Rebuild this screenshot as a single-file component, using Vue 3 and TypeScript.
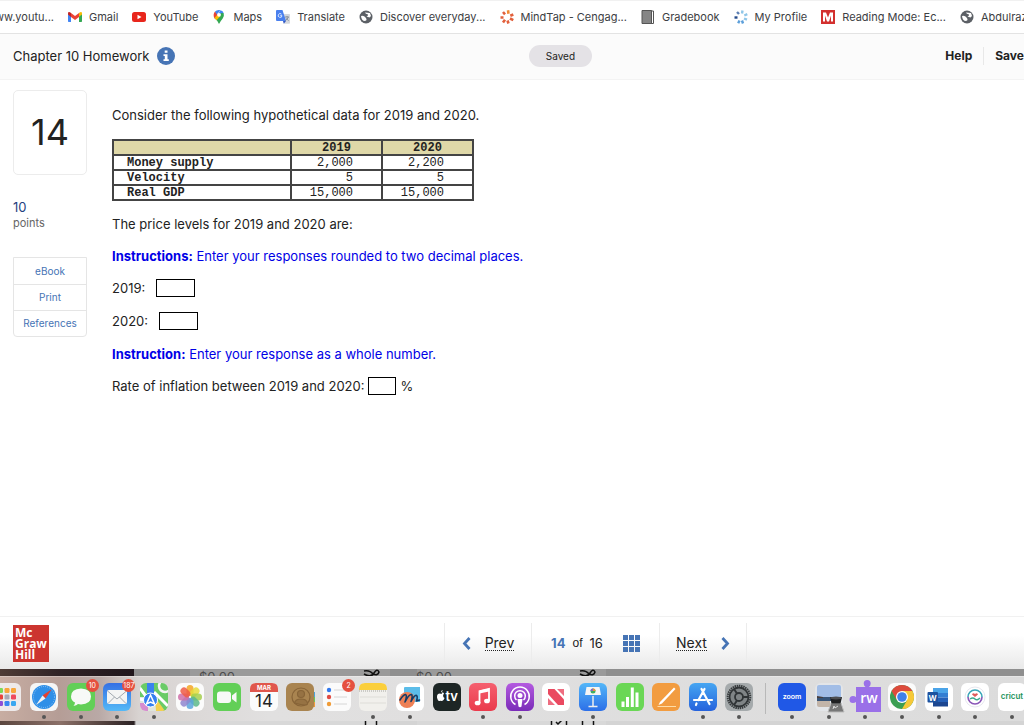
<script setup lang="ts">
import { ref } from 'vue'

interface Row {
  label: string
  first: string
  second: string
}

const rows: Row[] = [
  { label: 'Money supply', first: '2,000', second: '2,200' },
  { label: 'Velocity', first: '5', second: '5' },
  { label: 'Real GDP', first: '15,000', second: '15,000' },
]

const tools: string[] = ['eBook', 'Print', 'References']
const price2019 = ref('')
const price2020 = ref('')
const inflation = ref('')

const petals = [
  { angle: 0, color: '#f5a623' },
  { angle: 45, color: '#e5dc3c' },
  { angle: 90, color: '#a5cf4c' },
  { angle: 135, color: '#5cb88a' },
  { angle: 180, color: '#5aa5dc' },
  { angle: 225, color: '#8f86cf' },
  { angle: 270, color: '#cf6fa8' },
  { angle: 315, color: '#ee5a45' },
]

const launchpad = ['#7cd957', '#f7a63b', '#f7a63b', '#e8443a', '#a9a9b4', '#ee4a5f', '#8d4fd6', '#3a86f0', '#39a7f0']
</script>

<template>
  <div class="page">
    <nav class="bookmarks" aria-label="Bookmarks">
      <a href="#" class="bm bm-cut"><span>ww.youtu...</span></a>
      <a href="#" class="bm">
        <svg class="fav" viewBox="0 0 14 14"><path d="M0 3v8.300q0 .7.7.7H3V5.500z" fill="#4285f4" /><path d="M11 12h2.300q.7 0 .7-.7V3l-3 2.500z" fill="#34a853" /><path d="M11 6.700V3l1-.8q2-.9 2 1.200v1z" fill="#fbbc04" /><path d="M3 7V3l4 3.100L11 3v4l-4 3z" fill="#ea4335" /><path d="M0 4.500V3.400Q0 1.300 2 2.200l1 .8v3.900z" fill="#c5221f" /></svg>
        <span>Gmail</span>
      </a>
      <a href="#" class="bm">
        <svg class="fav" viewBox="0 0 14 14"><rect y="2" width="14" height="10" rx="2.500" fill="#e8261c" /><path d="M5.500 4.800 9.500 7l-4 2.200z" fill="#fff" /></svg>
        <span>YouTube</span>
      </a>
      <a href="#" class="bm">
        <svg class="fav" viewBox="0 0 14 14"><path d="M3 1.600 7 5 2.500 8.500Q.5 4.500 3 1.600" fill="#ea4335" /><path d="M3 1.600Q5 -.6 8.500.3L4.800 4.600z" fill="#4285f4" /><path d="M8.500.3Q11 1 11.700 3.200L7 9 5 6z" fill="#4285f4" /><path d="M2.500 7.900 9.300 3l2.400.2Q12.500 6 10.700 8.400 8.500 11 7 14 6 11 2.500 7.900" fill="#34a853" /><path d="m2.500 7.900 3-3.500 3 1.600-4 4.300z" fill="#fbbc04" /><circle cx="7" cy="4.800" r="1.900" fill="#fff" /></svg>
        <span>Maps</span>
      </a>
      <a href="#" class="bm">
        <svg class="fav" viewBox="0 0 14 14"><path d="M6 4h7.300q.7 0 .7.700V13q0 .8-.8.800H8z" fill="#d4d7dc" /><path d="M1 0h5.500L10 11H1q-1 0-1-1V1q0-1 1-1" fill="#4a80ee" /><path d="M7 11h3l-2.200 2.800z" fill="#2f55c4" /><path d="M5.500 4.200A1.900 1.900 0 1 0 6 5.700H4.200" fill="none" stroke="#e8effd" stroke-width=".9" /><path d="M9 7h4M11 6v1M12.300 7q-.5 2-3 3.700M10.200 8.500l2.500 2.200" stroke="#77818e" stroke-width=".8" fill="none" /></svg>
        <span>Translate</span>
      </a>
      <a href="#" class="bm">
        <svg class="fav" viewBox="0 0 14 14"><circle cx="7" cy="7" r="6.500" fill="#5c6066" /><path d="M2 6q2-.5 3.500.5T7.500 9 6 11Q2.500 11 2 6M6 2.500q1 2 2.500 1.500L9 5.500 7.500 6.500l3 1 1.500-1.500-1-3z" fill="#fff" /></svg>
        <span>Discover everyday...</span>
      </a>
      <a href="#" class="bm">
        <svg class="fav" viewBox="0 0 14 14"><g fill="none" stroke="#e2603c" stroke-width="2.600"><path d="m8.500 3.800-.5-3.500" stroke="#f08a32" /><path d="m10.300 5.800 3-1.300M10 8.500l3.300 1.700M7.500 10.500l1 3M5 9.800l-2 2.700M3.500 7.500H.5M5 4.300 3 2" /></g></svg>
        <span>MindTap - Cengag...</span>
      </a>
      <a href="#" class="bm">
        <svg class="fav" viewBox="0 0 14 14"><path d="M2 1h10.500v12.500H2z" fill="#fff" stroke="#555" /><path d="M1 .5h9.500v13H1z" fill="#858585" stroke="#555" /></svg>
        <span>Gradebook</span>
      </a>
      <a href="#" class="bm">
        <svg class="fav" viewBox="0 0 14 14"><g fill="none" stroke="#8fc6e8" stroke-width="2.400"><path d="m8 3.500.5-3M10.300 5.500l3-1.300M10 8.500l3 1.200" /><path d="m8 10.500 1 3M5.500 10.500l-1.300 2.800" stroke="#5c9fda" /><path d="M3.500 7.500H.5" stroke="#234a8c" /><path d="M5 4 3 2" stroke="#5c7fb4" /></g></svg>
        <span>My Profile</span>
      </a>
      <a href="#" class="bm">
        <svg class="fav" viewBox="0 0 14 14"><path d="M0 0h14v14H0z" fill="#d3302f" /><path d="M2 11.500v-9h3l2 5 2-5h3v9h-2v-6l-2 6H6l-2-6v6z" fill="#fff" /></svg>
        <span>Reading Mode: Ec...</span>
      </a>
      <a href="#" class="bm">
        <svg class="fav" viewBox="0 0 14 14"><circle cx="7" cy="7" r="6.500" fill="#5c6066" /><path d="M2 6q2-.5 3.500.5T7.500 9 6 11Q2.500 11 2 6M6 2.500q1 2 2.500 1.500L9 5.500 7.500 6.500l3 1 1.500-1.500-1-3z" fill="#fff" /></svg>
        <span>Abdulraz</span>
      </a>
    </nav>

    <header class="header">
      <div class="title">
        <h1>Chapter 10 Homework</h1>
        <button class="info" aria-label="Assignment information">
          <svg viewBox="0 0 18 18"><circle cx="9" cy="9" r="9" fill="#4674b5" /><path d="M7.700 3.500h2.800v2.300H7.700zM6.500 7.300h4v5h1.300V14H6.500v-1.700h1.300V9H6.500z" fill="#fff" /></svg>
        </button>
      </div>
      <span class="saved">Saved</span>
      <div class="actions">
        <a href="#">Help</a>
        <a href="#" class="save">Save</a>
      </div>
    </header>

    <main class="main">
      <aside class="side">
        <div class="number">14</div>
        <div class="points"><b>10</b><span>points</span></div>
        <div class="tools">
          <a v-for="tool in tools" :key="tool" href="#">{{ tool }}</a>
        </div>
      </aside>

      <section class="question">
        <p>Consider the following hypothetical data for 2019 and 2020.</p>
        <table>
          <thead>
            <tr><th></th><th scope="col">2019</th><th scope="col">2020</th></tr>
          </thead>
          <tbody>
            <tr v-for="row in rows" :key="row.label">
              <th scope="row">{{ row.label }}</th>
              <td>{{ row.first }}</td>
              <td>{{ row.second }}</td>
            </tr>
          </tbody>
        </table>
        <p>The price levels for 2019 and 2020 are:</p>
        <p class="hint"><strong>Instructions:</strong> Enter your responses rounded to two decimal places.</p>
        <div class="field"><label for="p19">2019:</label><input id="p19" v-model="price2019" type="text" /></div>
        <div class="field"><label for="p20">2020:</label><input id="p20" v-model="price2020" type="text" /></div>
        <p class="hint"><strong>Instruction:</strong> Enter your response as a whole number.</p>
        <div class="field rate"><label for="infl">Rate of inflation between 2019 and 2020:</label><input id="infl" v-model="inflation" type="text" /><span>%</span></div>
      </section>
    </main>

    <footer class="footer">
      <div class="logo">Mc<br />Graw<br />Hill</div>
      <nav class="pager" aria-label="Questions">
        <div class="cell prev">
          <svg viewBox="0 0 9 13"><path d="M7.500 1 2.500 6.500l5 5.500" fill="none" stroke="#4674b5" stroke-width="2.800" /></svg>
          <a href="#">Prev</a>
        </div>
        <div class="cell count">
          <b>14</b><span class="of">of</span><span>16</span>
          <button aria-label="All questions">
            <svg viewBox="0 0 17 17"><path d="M0 0h5v5H0zM6 0h5v5H6zM12 0h5v5h-5zM0 6h5v5H0zM6 6h5v5H6zM12 6h5v5h-5zM0 12h5v5H0zM6 12h5v5H6zM12 12h5v5h-5z" fill="#4674b5" /></svg>
          </button>
        </div>
        <div class="cell next">
          <a href="#">Next</a>
          <svg viewBox="0 0 9 13"><path d="m1.500 1 5 5.500-5 5.500" fill="none" stroke="#4674b5" stroke-width="2.800" /></svg>
        </div>
      </nav>
    </footer>

    <div class="desktop">
      <svg class="behind" width="1024" height="56" viewBox="0 0 1024 56" aria-hidden="true">
        <path d="M190 0h200v56H190zM417 0h189v56H417z" fill="#fff" opacity=".1" />
        <g fill="#4c4c4c" font-family="Inter, sans-serif" font-size="13"><text x="199" y="13">$0.00</text><text x="416" y="13">$0.00</text></g>
        <g fill="none" stroke="#111" stroke-width="1.500"><path d="M364 2q6-1 9 3 5 2 6-2-2-4-5 1t-10 1M580 2q6-1 9 3 5 2 6-2-2-4-5 1t-10 1" /><path d="M365.500 50v6M376.500 50v6M551.500 50v6M566.500 50v6M582.500 50v6M593.500 50v6M556 53l2 2 4-4" /></g>
      </svg>
      <ul class="dock">
        <li>
          <svg viewBox="0 0 28 28"><rect width="28" height="28" rx="6" fill="#eeeaea" /><rect v-for="(c, i) in launchpad" :key="i" :x="5 + (i % 3) * 6.500" :y="5 + Math.floor(i / 3) * 6.500" width="5" height="5" rx="1.200" :fill="c" /></svg>
        </li>
        <li class="open">
          <svg viewBox="0 0 28 28"><rect width="28" height="28" rx="6" fill="#f5f5f5" /><circle cx="14" cy="14" r="12" fill="#2f8fe8" /><circle cx="14" cy="14" r="10.500" fill="none" stroke="#b8dcf8" stroke-dasharray=".6 1.500" /><path d="m22 6-9.500 6.500 3 3z" fill="#e5402f" /><path d="m6 22 9.500-6.500-3-3z" fill="#f3f3f3" /></svg>
        </li>
        <li class="open">
          <svg viewBox="0 0 28 28"><rect width="28" height="28" rx="6" fill="#62cf57" /><path d="M8 19.500Q4 17.500 4 13.500q0-7.500 10-8 10 .5 10 8t-10 8l-3-.4Q9 23 6.500 22.700 8 21.500 8 19.500" fill="#f7f9f7" /></svg>
          <span class="badge">10</span>
        </li>
        <li class="open">
          <svg viewBox="0 0 28 28"><defs><linearGradient id="mail" x2="0" y2="1"><stop stop-color="#3570e4" /><stop offset="1" stop-color="#55b9f7" /></linearGradient></defs><rect width="28" height="28" rx="6" fill="url(#mail)" /><rect x="4" y="7" width="20" height="14" rx="2" fill="#f4f4f4" /><path d="m4.500 8 9.500 8 9.500-8M5 20.500l6.500-6.500M23 20.500 16.500 14" fill="none" stroke="#9aa0a8" stroke-width=".9" /></svg>
          <span class="badge">187</span>
        </li>
        <li class="open">
          <svg viewBox="0 0 28 28"><defs><clipPath id="mapclip"><rect width="28" height="28" rx="6" /></clipPath></defs><g clip-path="url(#mapclip)"><path d="M0 0h28v28H0z" fill="#dfe5dc" /><path d="M0 0h8v14H0zM14 0h14v28h-5L14 12z" fill="#6acb67" /><path d="M0 20h8v8H0z" fill="#d78ccf" /><path d="M16 28h9L15 14z" fill="#f3cf4d" /><path d="m-1 4 9 12M14 9l14 14M0 16l8 2" stroke="#fff" stroke-width="3" /><circle cx="25" cy="3" r="6" fill="none" stroke="#f4f4f4" stroke-width="2.500" /><path d="M7 0h7v14H7z" fill="#3a82ef" /></g><circle cx="10.500" cy="17" r="7" fill="#3480f0" stroke="#fff" /><path d="m10.500 12 4 9-4-2-4 2z" fill="none" stroke="#fff" stroke-width="1.500" /></svg>
        </li>
        <li>
          <svg viewBox="0 0 28 28"><rect width="28" height="28" rx="6" fill="#fbfbfb" /><rect v-for="p in petals" :key="p.angle" x="10.500" y="2" width="7" height="11" rx="3.500" :fill="p.color" opacity=".85" :transform="`rotate(${p.angle} 14 14)`" /></svg>
        </li>
        <li>
          <svg viewBox="0 0 28 28"><rect width="28" height="28" rx="6" fill="#62cf57" /><rect x="4" y="8.500" width="14" height="11.500" rx="3" fill="#f7f9f7" /><path d="m19 12.500 4.500-3.500v10.500L19 16z" fill="#f7f9f7" /></svg>
        </li>
        <li>
          <svg viewBox="0 0 28 28"><rect width="28" height="28" rx="6" fill="#fbfbfb" /><path d="M0 9V6q0-6 6-6h16q6 0 6 6v3z" fill="#e0564c" /><text x="14" y="7" text-anchor="middle" class="mar">MAR</text><text x="14" y="24" text-anchor="middle" class="day">14</text></svg>
        </li>
        <li>
          <svg viewBox="0 0 28 28"><path d="M25 9h4v5h-4z" fill="#4aa3dc" /><path d="M25 14h4v5h-4z" fill="#6cc65a" /><path d="M25 19h4v5h-4z" fill="#f09a3c" /><rect width="28" height="28" rx="6" fill="#a98450" /><g fill="none" stroke="#876438" stroke-width="1.200"><circle cx="15" cy="14" r="9" /><circle cx="15" cy="11" r="3.500" fill="#967243" /><path d="M8.500 20q1-4 6.500-4t6.500 4-13 0" fill="#967243" /></g></svg>
        </li>
        <li>
          <svg viewBox="0 0 28 28"><rect width="28" height="28" rx="6" fill="#fbfbfb" /><path d="M11 7h13M11 14h13M11 21h13" stroke="#d6d6d6" /><circle cx="6" cy="7" r="2.200" fill="#3279ee" /><circle cx="6" cy="14" r="2.200" fill="#e04b43" /><circle cx="6" cy="21" r="2.200" fill="#f09c38" /></svg>
          <span class="badge">2</span>
        </li>
        <li class="open">
          <svg viewBox="0 0 28 28"><rect width="28" height="28" rx="6" fill="#f1f0ec" /><path d="M0 7V6q0-6 6-6h16q6 0 6 6v1z" fill="#fbcf3c" /><path d="M0 8h28" stroke="#a5a5a0" stroke-dasharray="1 1" /><path d="M1 14h26M1 20h26" stroke="#deddd8" /></svg>
        </li>
        <li class="open">
          <svg viewBox="0 0 28 28"><rect width="28" height="28" rx="6" fill="#fff" /><path d="M8 5q0-1 1-1h15v15h-7L8 12z" fill="#5cbde9" /><circle cx="11" cy="17" r="8" fill="#ee8055" /><path d="M4 17q3-5 5.500-5.500 2 .5-.5 7.500 4-8 6.500-7.500 1.500 1-.5 7 3.500-7 5.500-6 1.500 1 0 5.500l3-1" fill="none" stroke="#153c66" stroke-width="1.600" stroke-linecap="round" stroke-linejoin="round" /></svg>
        </li>
        <li>
          <svg viewBox="0 0 28 28"><rect width="28" height="28" rx="6" fill="#1d2625" /><path d="M8.600 9.500q2.200-.4 2.400 1.200-1 .9-.9 2.200.1 1.500 1.500 2-1.400 3.600-3 3-1-.5-1.900 0Q5 18.700 4 14.500q-.3-4 3-4 1 .5 2.200 0zM8 9.300Q8 7.500 9.700 7 9.700 9 8 9.300" fill="#fff" /><text x="12.500" y="18" class="tv">tv</text></svg>
        </li>
        <li class="open">
          <svg viewBox="0 0 28 28"><defs><linearGradient id="music" x2="0" y2="1"><stop stop-color="#f5606f" /><stop offset="1" stop-color="#ea3a4c" /></linearGradient></defs><rect width="28" height="28" rx="6" fill="url(#music)" /><path d="M10.500 20V8.200L20 6v12" fill="none" stroke="#fff" stroke-width="1.800" /><path d="M10.500 7.500 20 5.500v3l-9.500 2z" fill="#fff" /><ellipse cx="8.600" cy="20" rx="2.900" ry="2.300" fill="#fff" /><ellipse cx="18" cy="18" rx="2.900" ry="2.300" fill="#fff" /></svg>
        </li>
        <li class="open">
          <svg viewBox="0 0 28 28"><defs><linearGradient id="pod" x2="0" y2="1"><stop stop-color="#b45ae0" /><stop offset="1" stop-color="#7a2cb8" /></linearGradient></defs><rect width="28" height="28" rx="6" fill="url(#pod)" /><g fill="none" stroke="#fff" stroke-width="1.500"><path d="M9.500 21.500a9.300 9.300 0 1 1 9 0M10.500 17a5.300 5.300 0 1 1 7 0" /></g><circle cx="14" cy="12.500" r="2.500" fill="#fff" /><path d="M11.500 16h5l-1 7.500q-1.500 1.500-3 0z" fill="#fff" /></svg>
        </li>
        <li>
          <svg viewBox="0 0 28 28"><rect width="28" height="28" rx="6" fill="#fff" /><path d="M6 6h6.500L22 16.500V22h-6L6 11z" fill="#ea4960" /><path d="M15 6h7v7zM6 15l7 7H6z" fill="#ea4960" opacity=".8" /></svg>
        </li>
        <li class="open">
          <svg viewBox="0 0 28 28"><defs><linearGradient id="key" x2="0" y2="1"><stop stop-color="#54b7f8" /><stop offset="1" stop-color="#2c6fe8" /></linearGradient></defs><rect width="28" height="28" rx="6" fill="url(#key)" /><path d="M14 13v10M9.500 23.500h9" stroke="#eee" stroke-width="1.500" /><path d="M7.500 4h13L22 12H6z" fill="#f5f5f5" /><circle cx="14" cy="8" r="2.500" fill="#3fae62" /><path d="M14 8V5.500A2.500 2.500 0 0 1 16.500 8z" fill="#f09030" /><path d="M14 8h-2.500A2.500 2.500 0 0 1 14 5.500z" fill="#8a62c8" /></svg>
        </li>
        <li>
          <svg viewBox="0 0 28 28"><rect width="28" height="28" rx="6" fill="#6ad755" /><path d="M5.500 18.500h3V24h-3zM10 14h3v10h-3zM14.800 4.500h3V24h-3zM19.500 9.500h3V24h-3z" fill="#fff" /></svg>
        </li>
        <li>
          <svg viewBox="0 0 28 28"><rect width="28" height="28" rx="6" fill="#f29c40" /><path d="M5.500 23.500H24" stroke="#ffdda8" /><path d="M22 4.500 8 19l-1.500 3L10 20.500 23.500 6z" fill="#fff" /></svg>
        </li>
        <li class="open">
          <svg viewBox="0 0 28 28"><defs><linearGradient id="store" x2="0" y2="1"><stop stop-color="#46a6f2" /><stop offset="1" stop-color="#2562dc" /></linearGradient></defs><rect width="28" height="28" rx="6" fill="url(#store)" /><path d="M12.500 6 20.500 21M15.500 6 9.500 17M7.500 20.500 7 22M5 17h11M19.500 17H23" fill="none" stroke="#fff" stroke-width="2.200" stroke-linecap="round" /></svg>
        </li>
        <li class="open">
          <svg viewBox="0 0 28 28"><rect width="28" height="28" rx="6" fill="#a5aaac" /><circle cx="14" cy="14" r="11.300" fill="none" stroke="#363a3c" stroke-width="2" stroke-dasharray="1.500 .7" /><circle cx="14" cy="14" r="9.500" fill="#7f8486" stroke="#303436" stroke-width="1.800" /><circle cx="14" cy="14" r="4" fill="none" stroke="#303436" stroke-width="1.800" /><path d="M18 14h5.500M12 10.500 9 6M12 17.500 9 22" stroke="#303436" stroke-width="2" /></svg>
        </li>
        <li class="divider" role="separator"></li>
        <li class="open">
          <svg viewBox="0 0 28 28"><rect width="28" height="28" rx="6" fill="#2058e6" /><text x="14" y="16" text-anchor="middle" class="zoomword">zoom</text></svg>
        </li>
        <li class="open">
          <svg viewBox="0 0 28 28"><rect width="28" height="28" rx="6" fill="#e3e5e8" /><path d="M2 4q0-2 2-2h20q2 0 2 2v11H2z" fill="#a2bde6" /><path d="M2 14h24v4H2z" fill="#375478" /><path d="M2 18h13v6H4q-2 0-2-2z" fill="#c2b4a8" /><path d="m2 13 6 1v1H2z" fill="#493e3c" /><path d="M16 20h10l3 9H13z" fill="#777" stroke="#bbb" /><path d="M15 14h12l-1.500 6.500h-9z" fill="#1f2022" /><ellipse cx="21" cy="15" rx="6" ry="1.500" fill="#4c4d50" /><path d="m18 26 1-3 1 2 3-2" fill="none" stroke="#ddd" /></svg>
        </li>
        <li class="open">
          <svg class="puzzle" viewBox="0 0 34 34"><path d="M8 8h9.500q-1.800-1.300-1.800-3.500a3.500 3.500 0 0 1 7 0Q22.700 6.700 21 8h12v25H8V23q-1.300 1-3 1a3.500 3.500 0 0 1 0-7q1.700 0 3 1z" fill="#9a70e8" /><text x="21" y="24" text-anchor="middle" class="rw">rw</text></svg>
        </li>
        <li class="open">
          <svg viewBox="0 0 28 28"><rect width="28" height="28" rx="6" fill="#fbfbfb" /><circle cx="14" cy="14" r="12" fill="#3b9e52" /><path d="M3.600 8A12 12 0 0 1 24.400 8H14L8.800 17z" fill="#dd4a3c" /><path d="M24.400 8A12 12 0 0 1 14 26l5.200-9L14 8z" fill="#f7c838" /><circle cx="14" cy="14" r="6" fill="#fff" /><circle cx="14" cy="14" r="4.800" fill="#3f80ea" /></svg>
        </li>
        <li class="open">
          <svg viewBox="0 0 28 28"><rect width="28" height="28" rx="6" fill="#fff" /><path d="M8 5h15v5H8z" fill="#4ba4e8" /><path d="M8 10h15v4.500H8z" fill="#347ed2" /><path d="M8 14.500h15V19H8z" fill="#2560b8" /><path d="M8 19h15v4.500H8z" fill="#1c4690" /><rect x="2.500" y="9" width="10.500" height="10.500" rx="1" fill="#1d529f" /><text x="7.700" y="17.500" text-anchor="middle" class="word">W</text></svg>
        </li>
        <li class="open">
          <svg viewBox="0 0 28 28"><rect width="28" height="28" rx="6" fill="#fff" /><circle cx="14" cy="14" r="10" fill="none" stroke="#e7e7ee" /><path d="M7 14a7 7 0 0 1 14 0" fill="none" stroke="#38a5b8" stroke-width="1.600" /><path d="M21 14a7 7 0 0 1-14 0" fill="none" stroke="#8a56b8" stroke-width="1.600" /><path d="m14 14-3-2.500q1-2 3-.5 2-1.500 3 .5z" fill="#df5b5b" /><path d="M9 16q3-2 5 0t5-1" fill="none" stroke="#3aa98e" stroke-width="1.500" /></svg>
        </li>
        <li class="open">
          <svg viewBox="0 0 28 28"><rect width="28" height="28" rx="6" fill="#fff" /><text x="14" y="16" text-anchor="middle" class="cricut">cricut</text></svg>
        </li>
      </ul>
    </div>
  </div>
</template>

<style>
body {
  margin: 0;
  overflow-x: hidden;
}
</style>

<style scoped>
.page {
  display: flex;
  flex-direction: column;
  min-height: 100vh;
  overflow: hidden;
  background: #fff;
  color: #222;
  font-family: Inter, 'Liberation Sans', sans-serif;
  font-size: 13px;
}
a {
  color: inherit;
  text-decoration: none;
}
button {
  padding: 0;
  border: 0;
  background: none;
}
svg {
  display: block;
}
.bookmarks {
  display: flex;
  align-items: center;
  gap: 14px;
  height: 34px;
  border-top: 1px solid #f1f1f1;
  border-bottom: 1px solid #e3e3e3;
  box-sizing: border-box;
  font-size: 11px;
  color: #3c4043;
  white-space: nowrap;
  overflow: hidden;
}
.bm {
  display: flex;
  align-items: center;
  gap: 7px;
  flex: none;
}
.bm-cut {
  justify-content: flex-end;
  width: 54px;
}
.fav {
  width: 14px;
  height: 14px;
}
.header {
  display: flex;
  align-items: center;
  justify-content: space-between;
  height: 44px;
  padding: 0 0 1px 13px;
  background: #fbfbfb;
  border-bottom: 1px solid #f3f3f3;
}
.title {
  display: flex;
  align-items: center;
  gap: 8px;
}
h1 {
  margin: 0;
  font-size: 13px;
  font-weight: 400;
}
.info {
  width: 18px;
  height: 18px;
}
.saved {
  padding: 0 17px;
  border-radius: 11px;
  background: #e4e2e6;
  font-size: 10px;
  line-height: 22px;
}
.actions {
  display: flex;
  font-size: 12px;
  font-weight: 700;
  line-height: 18px;
}
.save {
  margin-left: 11px;
  padding-left: 11px;
  border-left: 1px solid #e8e8e8;
}
.main {
  display: flex;
  flex: 1;
  gap: 25px;
  padding: 10px 13px;
}
.side {
  width: 74px;
  flex: none;
}
.number {
  border: 1px solid #ececec;
  border-radius: 5px;
  font-size: 36px;
  line-height: 83px;
  text-align: center;
}
.points {
  display: flex;
  flex-direction: column;
  margin: 24px 0 26px;
  font-size: 11px;
  line-height: 16px;
  color: #666;
}
.points b {
  font-size: 13px;
  font-weight: 400;
  color: #1f3f80;
}
.tools {
  border: 1px solid #e5e5e5;
  border-radius: 0 0 4px 4px;
  font-size: 10px;
  line-height: 26px;
  text-align: center;
  color: #4674b5;
}
.tools a {
  display: block;
}
.tools a + a {
  border-top: 1px solid #e5e5e5;
  line-height: 25px;
}
.question {
  padding-top: 16px;
  line-height: 18px;
}
p {
  margin: 0 0 14px;
}
table {
  width: 362px;
  height: 62px;
  margin: 15px 0 14px;
  border-collapse: collapse;
  table-layout: fixed;
  border: 2px solid #555;
  font-family: 'Liberation Mono', monospace;
  font-size: 12px;
  line-height: 11px;
}
th,
td {
  box-sizing: border-box;
  padding: 2px 28px 0 0;
  border: 2px solid #444;
  text-align: right;
}
th:first-child {
  width: 178px;
  padding: 2px 0 0 13px;
  text-align: left;
}
thead th {
  background: #dfd8a8;
}
thead th + th {
  padding: 2px 0 0;
  text-align: center;
}
.hint {
  color: #0000e6;
}
.field {
  display: flex;
  align-items: center;
  gap: 11px;
  margin-bottom: 15px;
}
.field input {
  width: 39px;
  height: 18px;
  padding: 0;
  border: 1px solid #000;
  box-sizing: border-box;
}
.rate {
  gap: 4px;
}
.rate input {
  width: 28px;
}
.footer {
  display: flex;
  align-items: center;
  height: 52px;
  padding-left: 13px;
  border-top: 1px solid #f1f1f1;
  background: linear-gradient(#fff 35%, #e9e9e9);
}
.logo {
  box-sizing: border-box;
  width: 36px;
  height: 37px;
  padding: 2px;
  background: #cc352f;
  color: #fff;
  font-family: 'Open Sans', sans-serif;
  font-size: 12px;
  font-weight: 700;
  line-height: 11px;
}
.pager {
  display: flex;
  margin: 0 277px 0 auto;
  border-right: 1px solid #ececec;
  font-size: 14px;
  line-height: 40px;
}
.cell {
  display: flex;
  align-items: center;
  justify-content: center;
  box-sizing: border-box;
  width: 87px;
  border-left: 1px solid #ececec;
}
.cell a {
  line-height: 14px;
  border-bottom: 1px dotted #222;
}
.cell svg {
  width: 9px;
  height: 13px;
}
.prev,
.next {
  gap: 14px;
}
.cell.count {
  width: 128px;
  gap: 7px;
  font-size: 13px;
}
.count b {
  color: #4674b5;
}
.of {
  font-family: 'Liberation Sans', sans-serif;
  font-size: 12px;
}
.count button,
.count svg {
  width: 17px;
  height: 17px;
}
.count button {
  margin-left: 13px;
}
.desktop {
  position: relative;
  padding: 7px 0 4px;
  background:
    linear-gradient(90deg, #5b463f 0, #8b7068 60px, #4a3a38 110px, #2c2224 134px, #d4d4d4 136px) bottom / 100% 4px no-repeat,
    linear-gradient(90deg, #4f3c36 0, #302326 60px, #21171c 134px, #8f8f8f 134px);
}
.behind {
  position: absolute;
  left: 0;
  top: 0;
}
.dock {
  position: relative;
  display: flex;
  height: 45px;
  list-style: none;
  background: linear-gradient(90deg, #cbb0a4 0, #b59d96 70px, #b9a9a6 110px, #d8d3d1 150px, #e1e0e0 280px, #dcdcdc);
  box-shadow: inset 0 1px rgba(255, 255, 255, 0.3);
  padding: 7px 0 0;
  box-sizing: border-box;
  margin: 0 -6px 0 -11px;
}
.dock li {
  position: relative;
  display: flex;
  flex: 1;
  flex-direction: column;
  align-items: center;
  gap: 4px;
}
.dock li > svg {
  flex: none;
  width: 28px;
  height: 28px;
  overflow: visible;
}
.open::after {
  content: '';
  width: 4px;
  height: 4px;
  border-radius: 2px;
  background: #555;
}
.dock li > .puzzle {
  width: 34px;
  height: 34px;
  margin: -4px 0 -2px;
}
.dock .divider {
  flex: 0 0 16px;
}
.divider::before {
  content: '';
  width: 1px;
  height: 31px;
  background: #b8b8b8;
}
.badge {
  position: absolute;
  top: -4px;
  right: 0;
  min-width: 13px;
  padding: 0 1px;
  box-sizing: border-box;
  border-radius: 7px;
  background: #e5503f;
  color: #fff;
  font-size: 7px;
  line-height: 13px;
  text-align: center;
}
.mar {
  fill: #fff;
  font: 700 6px Inter, sans-serif;
}
.day {
  fill: #222;
  font: 400 17px Inter, sans-serif;
}
.tv {
  fill: #fff;
  font: 600 13px Inter, sans-serif;
}
.zoomword {
  fill: #fff;
  font: 600 7px Inter, sans-serif;
}
.rw {
  fill: #fff;
  font: 600 14px 'Open Sans', sans-serif;
}
.word {
  fill: #fff;
  font: 700 8px 'Open Sans', sans-serif;
}
.cricut {
  fill: #22935a;
  font: 600 8px Inter, sans-serif;
}
</style>
